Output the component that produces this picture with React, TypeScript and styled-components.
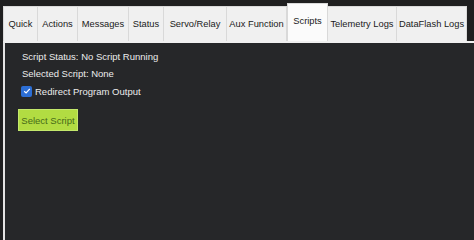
import styled, { createGlobalStyle } from "styled-components";

const GlobalStyle = createGlobalStyle`
  html, body {
    margin: 0;
    padding: 0;
    background: #1f1f20;
  }
  body {
    font-family: "Liberation Sans", Arial, sans-serif;
  }
`;

const Window = styled.div`
  width: 100%;
  min-width: 474px;
  height: 100vh;
  min-height: 207px;
  box-sizing: border-box;
  padding: 3px 0 0 3px;
  display: flex;
  flex-direction: column;
  background: #1f1f20;
  overflow: hidden;
`;

const TabStrip = styled.div`
  display: flex;
  align-items: flex-end;
  height: 38px;
  flex-shrink: 0;
`;

const Tab = styled.div<{ $width: number; $active?: boolean }>`
  box-sizing: border-box;
  width: ${(p) => p.$width}px;
  height: ${(p) => (p.$active ? 38 : 35)}px;
  display: flex;
  align-items: center;
  justify-content: center;
  padding-bottom: ${(p) => (p.$active ? 3 : 0)}px;
  background: ${(p) => (p.$active ? "#fbfbfb" : "#f0f0f0")};
  border: 1px solid #d9d9d9;
  border-bottom: none;
  border-left-width: ${(p) => (p.$active ? 1 : 0)}px;
  font-size: 9.3px;
  color: #1a1a1a;
  white-space: nowrap;
  &:first-child {
    border-left-width: 1px;
  }
`;

const Panel = styled.div`
  flex: 1;
  background: #262729;
  border-top: 2px solid #f0f0f0;
  border-left: 2px solid #e4e4e4;
  padding: 5px 0 0 17px;
  display: flex;
  flex-direction: column;
  align-items: flex-start;
`;

const InfoLine = styled.div`
  font-size: 9.5px;
  line-height: 17px;
  color: #ececec;
`;

const CheckRow = styled.label`
  display: flex;
  align-items: center;
  gap: 3px;
  height: 18px;
  font-size: 9.5px;
  color: #ececec;
  margin-left: -1px;
`;

const CheckBox = styled.span`
  width: 11px;
  height: 11px;
  border-radius: 2px;
  background: #2c6ed4;
  display: flex;
  align-items: center;
  justify-content: center;
`;

const SelectButton = styled.button`
  margin: 9px 0 0 -4px;
  width: 60px;
  height: 22px;
  padding: 0;
  background: #b2dc42;
  border: 1px solid #c4e86c;
  color: #466a18;
  font-family: "Liberation Sans", Arial, sans-serif;
  font-size: 9.5px;
`;

const tabs: { label: string; width: number; active?: boolean }[] = [
  { label: "Quick", width: 35 },
  { label: "Actions", width: 40 },
  { label: "Messages", width: 51 },
  { label: "Status", width: 35 },
  { label: "Servo/Relay", width: 63 },
  { label: "Aux Function", width: 60 },
  { label: "Scripts", width: 41, active: true },
  { label: "Telemetry Logs", width: 69 },
  { label: "DataFlash Logs", width: 70 },
];

function App() {
  return (
    <>
      <GlobalStyle />
      <Window>
        <TabStrip>
          {tabs.map((t) => (
            <Tab key={t.label} $width={t.width} $active={t.active}>
              {t.label}
            </Tab>
          ))}
        </TabStrip>
        <Panel>
          <InfoLine>Script Status: No Script Running</InfoLine>
          <InfoLine>Selected Script: None</InfoLine>
          <CheckRow>
            <CheckBox>
              <svg width="8" height="8" viewBox="0 0 8 8">
                <path d="M1.2 4.2 L3.1 6 L6.8 1.8" fill="none" stroke="#ffffff" strokeWidth="1.2" />
              </svg>
            </CheckBox>
            Redirect Program Output
          </CheckRow>
          <SelectButton>Select Script</SelectButton>
        </Panel>
      </Window>
    </>
  );
}

export default App;
